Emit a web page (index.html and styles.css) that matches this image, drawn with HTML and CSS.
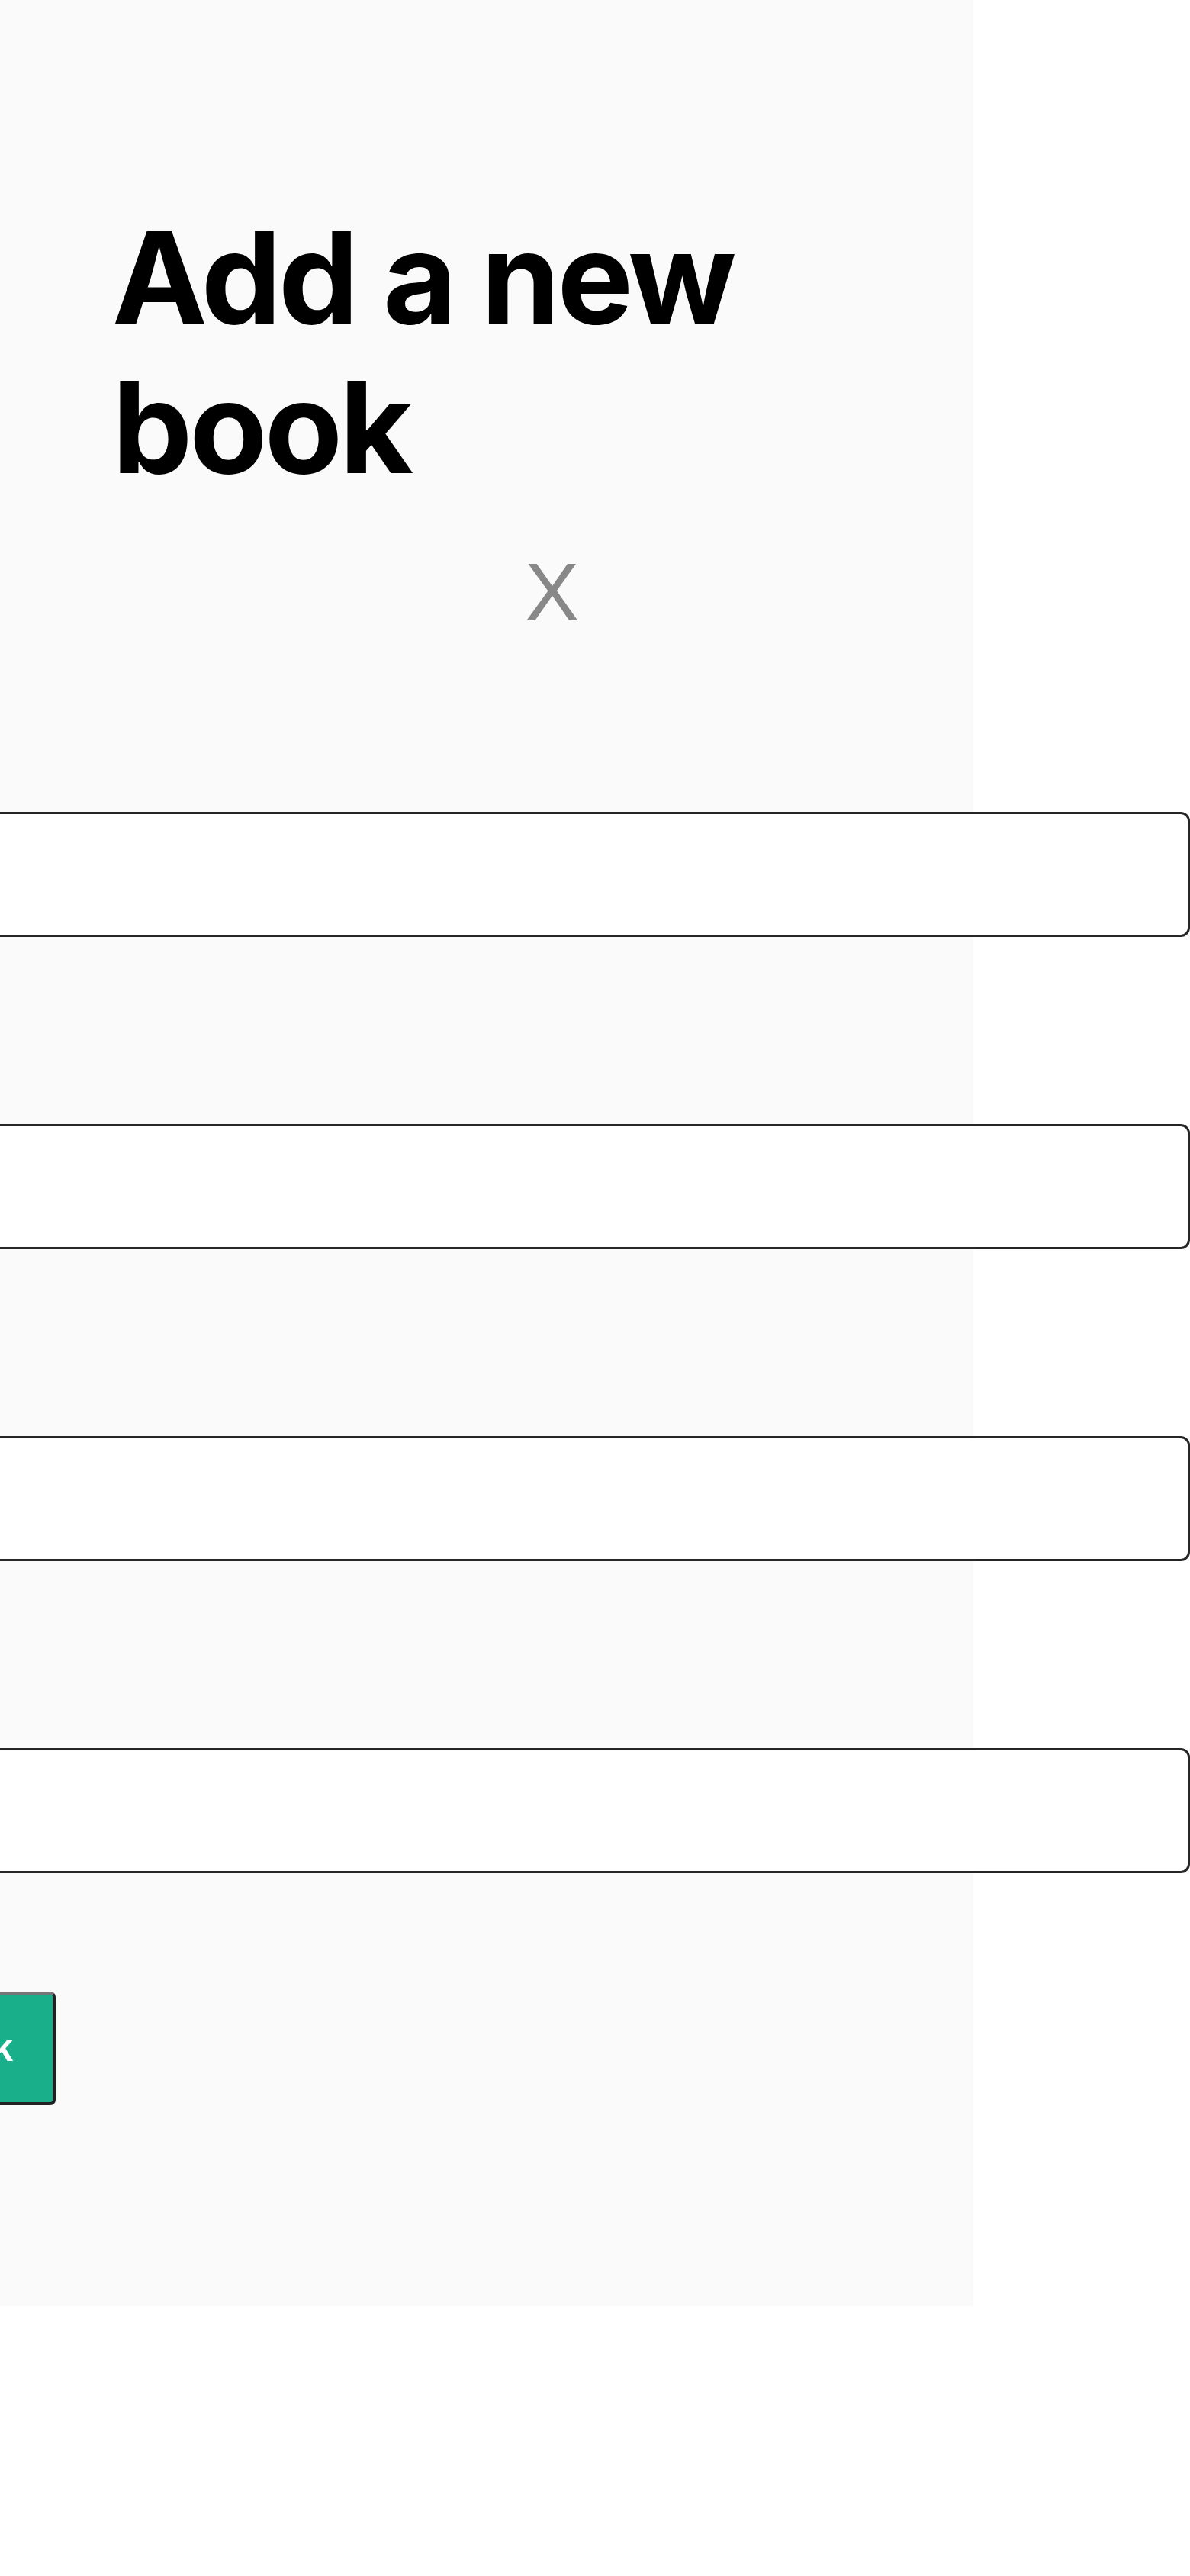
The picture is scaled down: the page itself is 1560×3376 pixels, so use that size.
FILE: index.html
```html
<!DOCTYPE html>
<html lang="en">
<head>
<meta charset="utf-8">
<title>Add a new book</title>
<link rel="stylesheet" href="styles.css">
</head>
<body>
<div class="panel">
  <header class="modal-head">
    <h1 class="title">Add a new book</h1>
    <button class="close" type="button" aria-label="Close">X</button>
  </header>
  <form class="form">
    <input class="field" type="text" name="title" aria-label="Title">
    <input class="field" type="text" name="author" aria-label="Author">
    <input class="field" type="text" name="genre" aria-label="Genre">
    <input class="field" type="text" name="pages" aria-label="Pages">
    <div class="actions">
      <button class="submit" type="submit">Add book</button>
    </div>
  </form>
</div>
</body>
</html>
```

FILE: styles.css
```css
html, body {
  margin: 0;
  padding: 0;
  background: #ffffff;
  font-family: Inter, "Noto Sans", sans-serif;
}

body {
  overflow: hidden;
}

.panel {
  width: 1276px;
  height: 3022px;
  box-sizing: border-box;
  background: #fafafa;
  padding-top: 265px;
}

.modal-head {
  padding-left: 147px;
}

.title {
  margin: 0;
  font-size: 167px;
  line-height: 196px;
  font-weight: 700;
  letter-spacing: -4px;
  color: #000;
}

.close {
  display: block;
  margin: 55px 0 0 541px;
  padding: 0;
  border: none;
  background: none;
  font-family: "Liberation Sans", Arial, sans-serif;
  font-size: 107px;
  line-height: 128px;
  font-weight: 400;
  color: #888888;
}

.form {
  display: flex;
  flex-direction: column;
  margin: 224px 0 0 -300px;
  width: 1860px;
}

.field {
  display: block;
  box-sizing: border-box;
  width: 100%;
  height: 164px;
  margin: 0 0 245px 0;
  border: 3px solid #262626;
  border-radius: 12px;
  background: #ffffff;
}

.field:nth-of-type(4) {
  margin-bottom: 155px;
}

.actions {
  display: flex;
  justify-content: flex-end;
  width: 373px;
}

.submit {
  box-sizing: border-box;
  height: 149px;
  padding: 40px 52px 40px 56px;
  border-style: solid;
  border-width: 4px;
  border-color: #777777 #222222 #222222 #777777;
  border-radius: 7px;
  background: #1aaf8b;
  color: #ffffff;
  font-family: "Liberation Sans", Arial, sans-serif;
  font-size: 50px;
  line-height: 61px;
  font-weight: 700;
}
```
